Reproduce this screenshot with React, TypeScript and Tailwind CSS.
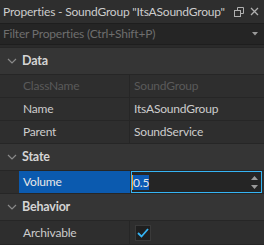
import { useState } from "react";

const font = { fontFamily: '"Lato", "Noto Sans", sans-serif' };

const Chevron = () => (
  <svg width="10" height="6" viewBox="0 0 10 6" className="shrink-0">
    <path d="M1 1 L5 5 L9 1" fill="none" stroke="#8a8a8a" strokeWidth="1.2" />
  </svg>
);

const Header = ({ title }: { title: string }) => (
  <div className="flex items-center h-[27px] bg-[#353535] border-b border-[#262626]">
    <div className="w-[22px] flex justify-center pl-[2px]">
      <Chevron />
    </div>
    <span className="text-[12.5px] font-bold text-[#d4d4d4]">{title}</span>
  </div>
);

const Row = ({ label, value, dim }: { label: string; value: string; dim?: boolean }) => (
  <div className="flex h-[23px] border-b border-[#262626] bg-[#2e2e2e]">
    <div className={`w-[130px] pl-[23px] flex items-center border-r border-[#262626] text-[12px] ${dim ? "text-[#5a5a5a]" : "text-[#cccccc]"}`}>
      {label}
    </div>
    <div className={`flex-1 pl-[4px] flex items-center text-[12px] ${dim ? "text-[#5a5a5a]" : "text-[#cccccc]"}`}>
      {value}
    </div>
  </div>
);

export default function App() {
  const [checked] = useState(true);
  return (
    <div className="w-[264px] h-[245px] bg-[#2e2e2e] overflow-hidden select-none tracking-[-0.2px]" style={font}>
      {/* Title */}
      <div className="h-[23px] flex items-center bg-[#2e2e2e] pl-[3px] pr-[5px]">
        <span className="text-[12px] text-[#cccccc] flex-1 whitespace-nowrap overflow-hidden">Properties - SoundGroup "ItsASoundGroup"</span>
        <svg width="10" height="10" viewBox="0 0 10 10" className="ml-[6px] shrink-0">
          <rect x="0.5" y="3.5" width="6" height="6" fill="none" stroke="#b0b0b0" />
          <path d="M3.5 3.5 V0.5 H9.5 V6.5 H6.5" fill="none" stroke="#b0b0b0" />
        </svg>
        <svg width="9" height="9" viewBox="0 0 9 9" className="ml-[6px] shrink-0">
          <path d="M1 1 L8 8 M8 1 L1 8" stroke="#b0b0b0" strokeWidth="1.3" />
        </svg>
      </div>
      {/* Filter */}
      <div className="h-[22px] flex items-center bg-[#252525] border-y border-[#1e1e1e] pl-[3px] pr-[6px]">
        <span className="text-[12px] text-[#6e6e6e] flex-1">Filter Properties (Ctrl+Shift+P)</span>
        <svg width="6" height="4" viewBox="0 0 6 4">
          <path d="M0 0 H6 L3 3.5 Z" fill="#9a9a9a" />
        </svg>
      </div>
      <div className="h-[3px] bg-[#2a2a2a] border-b border-[#262626]" />

      <Header title="Data" />
      <Row label="ClassName" value="SoundGroup" dim />
      <Row label="Name" value="ItsASoundGroup" />
      <Row label="Parent" value="SoundService" />

      <Header title="State" />
      <div className="flex h-[23px] border-b border-[#262626] bg-[#2e2e2e]">
        <div className="w-[19px]" />
        <div className="w-[111px] pl-[4px] flex items-center bg-[#0b5aaf] text-[12px] text-[#e8e8e8]">Volume</div>
        <div className="flex-1 flex items-center border border-[#35b4f4] bg-[#252525] mr-[2px] ml-[1px] pr-[3px]">
          <span className="w-[1px] h-[15px] bg-[#ff9a1a]" />
          <span className="bg-[#0d5bb5] text-[12px] text-[#e8e8e8] leading-[15px]">0.5</span>
          <span className="flex-1" />
          <div className="flex flex-col gap-[5px]">
            <svg width="7" height="4" viewBox="0 0 7 4"><path d="M0 4 H7 L3.5 0 Z" fill="#9a9a9a" /></svg>
            <svg width="7" height="4" viewBox="0 0 7 4"><path d="M0 0 H7 L3.5 4 Z" fill="#9a9a9a" /></svg>
          </div>
        </div>
      </div>

      <Header title="Behavior" />
      <div className="flex h-[24px] border-b border-[#262626] bg-[#2e2e2e]">
        <div className="w-[130px] pl-[23px] flex items-center border-r border-[#262626] text-[12px] text-[#cccccc]">Archivable</div>
        <div className="flex-1 pl-[5px] flex items-center">
          <div className="w-[16px] h-[16px] bg-[#1f1f1f] border border-[#3a3a3a] flex items-center justify-center">
            {checked && (
              <svg width="12" height="10" viewBox="0 0 12 10">
                <path d="M1 5 L4.5 8.5 L11 1" fill="none" stroke="#35b4f4" strokeWidth="1.8" />
              </svg>
            )}
          </div>
        </div>
      </div>
    </div>
  );
}
